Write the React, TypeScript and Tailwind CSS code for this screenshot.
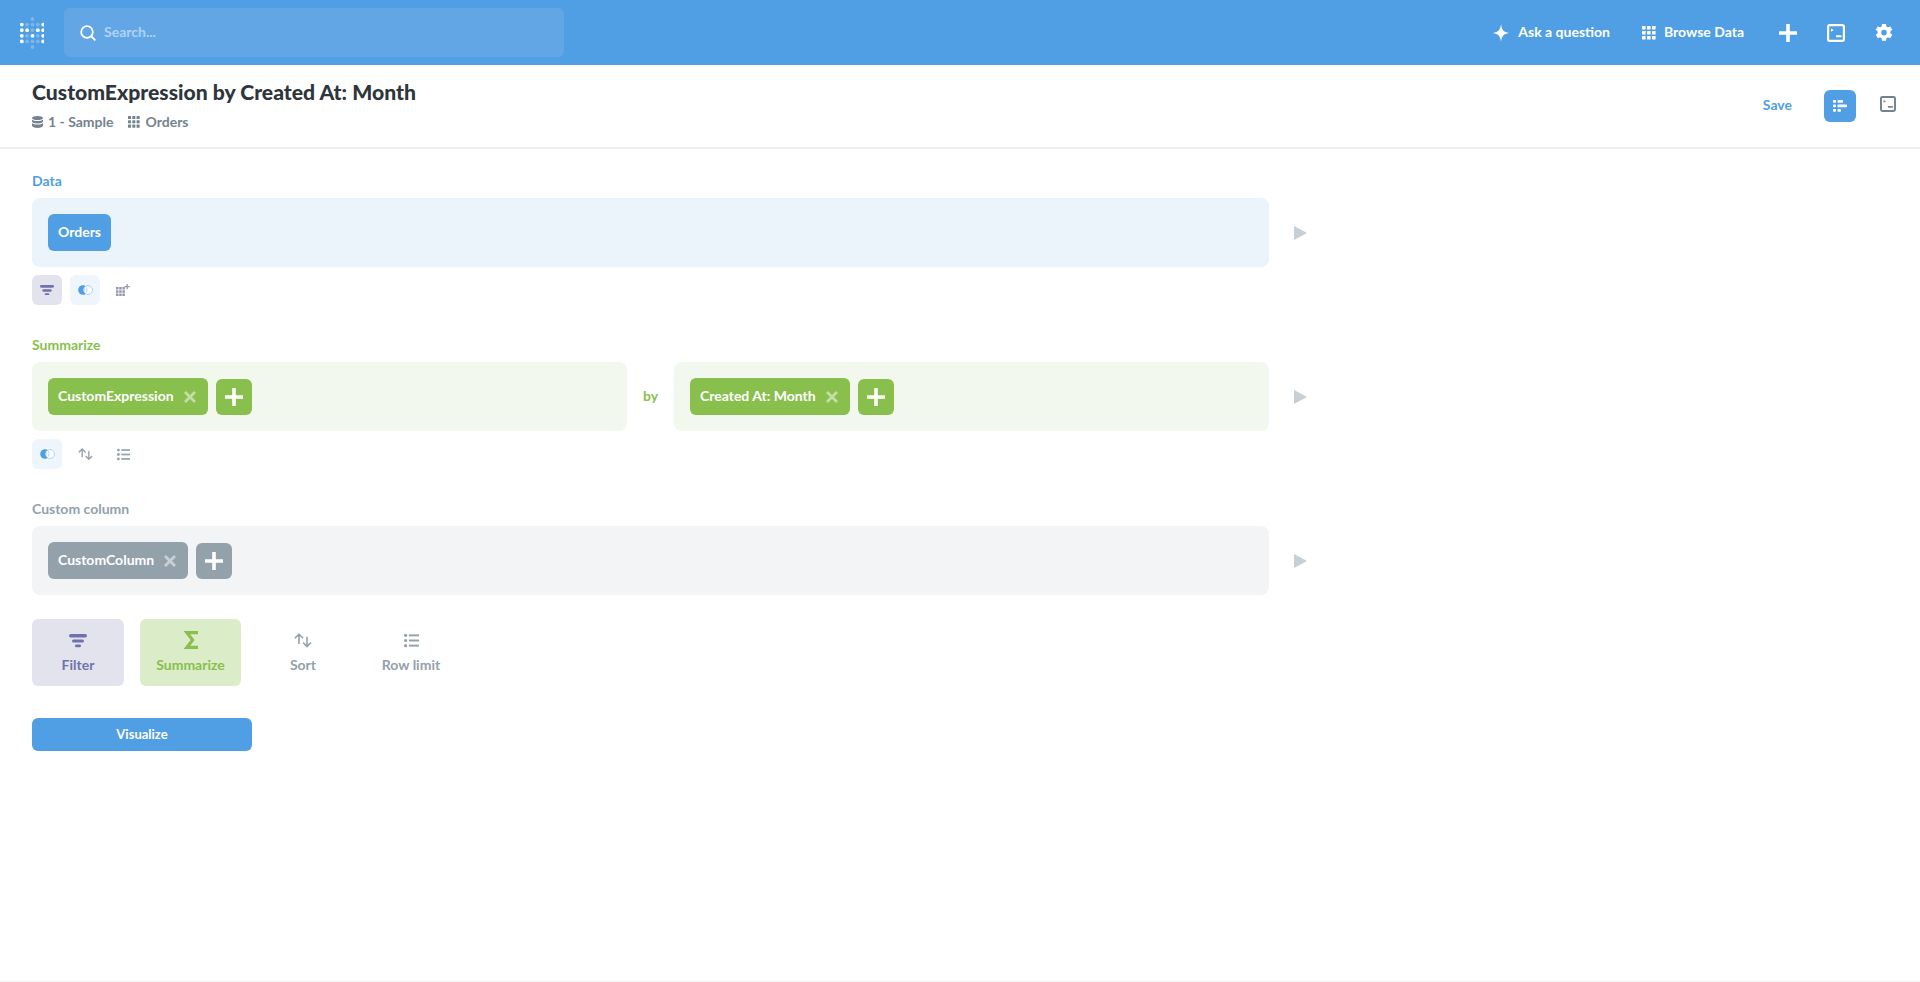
import type { ReactNode } from "react";

const Plus = ({ size = 18, className = "" }: { size?: number; className?: string }) => (
  <svg width={size} height={size} viewBox="0 0 18 18" className={className} fill="currentColor">
    <path d="M7.2 0h3.6v7.2H18v3.6h-7.2V18H7.2v-7.2H0V7.2h7.2z" />
  </svg>
);

const Close = () => (
  <svg width="12" height="12" viewBox="0 0 12 12" className="ml-[10px] mt-[2px] opacity-50">
    <path d="M1 1l10 10M11 1L1 11" stroke="currentColor" strokeWidth="2.8" />
  </svg>
);

const Grid = ({ size = 14 }: { size?: number }) => (
  <svg width={size} height={size} viewBox="0 0 14 14" fill="currentColor">
    {[0, 5, 10].map((y) =>
      [0, 5, 10].map((x) => <rect key={`${x}-${y}`} x={x} y={y} width="3.6" height="3.6" rx="0.4" />),
    )}
  </svg>
);

const Terminal = ({ size = 18 }: { size?: number }) => (
  <svg width={size} height={size} viewBox="0 0 18 18" fill="none">
    <rect x="1.1" y="1.1" width="15.8" height="15.8" rx="1.6" stroke="currentColor" strokeWidth="2.2" />
    <path d="M4 4.500l2.800 1.600L4 7.700z" fill="currentColor" />
    <rect x="9" y="11.300" width="5.500" height="1.900" fill="currentColor" />
  </svg>
);

const Funnel = ({ width = 18 }: { width?: number }) => (
  <svg width={width} height={(width * 14) / 18} viewBox="0 0 18 14" fill="currentColor">
    <rect x="0" y="0" width="18" height="3.4" rx="1.7" />
    <rect x="3" y="5.6" width="12" height="3" rx="1.5" />
    <rect x="6" y="10.6" width="6" height="2.6" rx="1.3" />
  </svg>
);

const Join = () => (
  <svg width="15" height="10" viewBox="0 0 15 10" className="text-[#509ee3]">
    <circle cx="5" cy="5" r="4.8" fill="currentColor" />
    <circle cx="10" cy="5" r="4.4" fill="#fff" stroke="currentColor" strokeOpacity="0.6" strokeWidth="0.7" />
    <path d="M7.500 1a4.800 4.800 0 0 1 0 8a4.800 4.800 0 0 1 0-8z" fill="#c5def5" />
    <path d="M7.500 2v6" stroke="#fff" strokeWidth="1.200" />
  </svg>
);

const SortIcon = ({ width = 15 }: { width?: number }) => (
  <svg width={width} height={(width * 14) / 17} viewBox="0 0 17 14" fill="none" stroke="currentColor" strokeWidth="1.5">
    <path d="M4.700 10.500V1.200M.8 5l3.900-3.900L8.600 5" />
    <path d="M12.300 3.500v9.300M8.600 9l3.700 3.800L16.100 9" />
  </svg>
);

const ListIcon = ({ size = 14 }: { size?: number }) => (
  <svg width={size} height={size} viewBox="0 0 14 14" fill="currentColor">
    <circle cx="1.5" cy="2.2" r="1.5" />
    <circle cx="1.5" cy="7" r="1.5" />
    <circle cx="1.5" cy="11.8" r="1.5" />
    <rect x="4.6" y="1.3" width="9.4" height="1.8" />
    <rect x="4.6" y="6.1" width="9.4" height="1.8" />
    <rect x="4.6" y="10.9" width="9.4" height="1.8" />
  </svg>
);

const Play = () => (
  <svg width="13" height="14" viewBox="0 0 13 14" className="text-[#c6ced6]" fill="currentColor">
    <path d="M0 0l13 7L0 14z" />
  </svg>
);

const Logo = () => {
  const on = ["1-0", "1-4", "2-0", "2-1", "2-3", "2-4", "3-0", "3-2", "3-4", "4-0", "4-4"];
  const rows = [
    [2],
    [0, 1, 2, 3, 4],
    [0, 1, 2, 3, 4],
    [0, 1, 2, 3, 4],
    [0, 1, 2, 3, 4],
    [2],
  ];
  return (
    <svg width="24" height="32" viewBox="0 0 24 32" fill="#fff">
      {rows.map((cols, r) =>
        cols.map((c) => (
          <circle
            key={`${r}-${c}`}
            cx={1.8 + c * 5.35}
            cy={2 + r * 5.6}
            r="1.9"
            opacity={on.includes(`${r}-${c}`) ? 1 : 0.25}
          />
        )),
      )}
    </svg>
  );
};

const Chip = ({ label, bg, x = true }: { label: string; bg: string; x?: boolean }) => (
  <div
    className={`flex h-[37px] items-center rounded-md pb-[2px] pl-[10px] text-[14px] font-bold text-white ${x ? "pr-3" : "pr-[10px]"} ${bg}`}
  >
    {label}
    {x && <Close />}
  </div>
);

const AddButton = ({ bg }: { bg: string }) => (
  <button type="button" className={`mt-px flex h-9 w-9 items-center justify-center rounded-md text-white ${bg}`}>
    <Plus />
  </button>
);

const Card = ({ bg, children }: { bg: string; children: ReactNode }) => (
  <div className={`flex h-[69px] flex-1 items-center gap-2 rounded-lg px-4 ${bg}`}>{children}</div>
);

const Step = ({
  title,
  color,
  children,
  actions,
}: {
  title: string;
  color: string;
  children: ReactNode;
  actions?: ReactNode;
}) => (
  <div>
    <div className={`mb-[7px] h-5 text-[14px] font-bold leading-5 ${color}`}>{title}</div>
    <div className="flex items-center">
      <div className="flex w-[1237px]">{children}</div>
      <div className="ml-[25px]">
        <Play />
      </div>
    </div>
    {actions && <div className="mb-[30px] mt-2 flex h-[30px] gap-2">{actions}</div>}
  </div>
);

const ActionIcon = ({ bg = "", children }: { bg?: string; children: ReactNode }) => (
  <div className={`flex h-[30px] w-[30px] items-center justify-center rounded-md ${bg}`}>{children}</div>
);

const TallAction = ({
  label,
  icon,
  className,
}: {
  label: string;
  icon: ReactNode;
  className: string;
}) => (
  <div className={`flex h-[67px] flex-col items-center rounded-md text-[14px] font-bold ${className}`}>
    <div className="flex h-[29px] items-end">{icon}</div>
    <div className="mt-[7px] leading-5">{label}</div>
  </div>
);

export default function App() {
  return (
    <div className="flex h-[982px] flex-col overflow-hidden bg-white font-['Lato',sans-serif] text-[#4c5773]">
      <header className="flex h-[65px] shrink-0 items-center bg-[#509ee3] text-white">
        <div className="ml-5 w-[24px]">
          <Logo />
        </div>
        <div className="ml-5 flex h-[49px] w-[500px] items-center rounded-md bg-[#63a6e6] pl-4">
          <svg width="16" height="16" viewBox="0 0 16 16" fill="none" stroke="#fff" strokeWidth="1.8">
            <circle cx="7" cy="7" r="5.8" />
            <path d="M11 11l4.4 4.4" />
          </svg>
          <span className="mb-[2px] ml-2 text-[14px] font-bold text-white/50">Search...</span>
        </div>
        <div className="ml-auto flex items-center text-[14px] font-bold">
          <svg width="16" height="18" viewBox="0 0 16 18" fill="currentColor">
            <path d="M8 0c.6 5.4 2.4 8 8 9-5.6 1-7.4 3.6-8 9-.6-5.4-2.4-8-8-9 5.600-1 7.400-3.600 8-9z" />
          </svg>
          <span className="mb-[2px] ml-[9px]">Ask a question</span>
          <span className="ml-8">
            <Grid />
          </span>
          <span className="mb-[2px] ml-2">Browse Data</span>
          <Plus className="ml-[35px]" />
          <span className="ml-[30px]">
            <Terminal />
          </span>
          <svg width="18" height="18" viewBox="0 0 24 24" className="ml-[30px] mr-[27px]" fill="currentColor">
            <path
              fillRule="evenodd"
              d="M14.6 0l.6 3.300c.7.3 1.400.7 2 1.100l3.200-1.100 2.600 4.500-2.600 2.200c.1.700.1 1.500 0 2.200l2.600 2.200-2.600 4.500-3.200-1.100c-.6.4-1.300.8-2 1.100l-.6 3.300H9.400l-.6-3.300c-.7-.3-1.400-.7-2-1.100l-3.200 1.100L1 14.400l2.600-2.200c-.1-.7-.1-1.500 0-2.200L1 7.800l2.600-4.500 3.200 1.100c.6-.4 1.300-.8 2-1.100L9.400 0h5.200zM12 7.800a3.700 3.700 0 1 0 0 7.400 3.700 3.700 0 0 0 0-7.400z"
            />
          </svg>
        </div>
      </header>

      <div className="flex h-[84px] shrink-0 items-start justify-between border-b-2 border-[#f0f0f0] pl-8 pr-[24px]">
        <div>
          <h1 className="mt-[15px] text-[21.15px] font-black leading-6 text-[#2e353b]">
            CustomExpression by Created At: Month
          </h1>
          <div className="mt-[9px] flex items-center text-[14px] font-bold leading-[18px] text-[#74838f]">
            <svg width="11" height="12" viewBox="0 0 11 12" fill="currentColor">
              <ellipse cx="5.500" cy="2" rx="5.500" ry="2" />
              <path d="M0 3.400c1 1.200 3.200 1.600 5.500 1.600s4.500-.4 5.500-1.600V5.500C11 6.700 8.500 7.500 5.500 7.500S0 6.700 0 5.500zM0 7c1 1.200 3.200 1.600 5.500 1.600S10 8.200 11 7v2.600c0 1.300-2.500 2.400-5.500 2.400S0 10.900 0 9.600z" />
            </svg>
            <span className="ml-[5px]">1 - Sample</span>
            <span className="ml-[15px]">
              <Grid size={12} />
            </span>
            <span className="ml-[5px]">Orders</span>
          </div>
        </div>
        <div className="flex items-center pt-[25px]">
          <span className="mb-1 text-[14px] font-bold text-[#509ee3]">Save</span>
          <div className="ml-8 flex h-8 w-8 items-center justify-center rounded-md bg-[#509ee3] text-white">
            <svg width="14" height="12" viewBox="0 0 14 12" fill="currentColor">
              <rect x="0" y="0" width="3" height="2.800" rx="0.800" />
              <rect x="0" y="4.500" width="3" height="2.800" rx="0.800" />
              <rect x="0" y="9" width="3" height="2.800" rx="0.800" />
              <rect x="4.500" y="0" width="5.500" height="2.800" rx="0.800" />
              <rect x="4.500" y="4.500" width="9.500" height="2.800" rx="0.800" />
              <rect x="4.500" y="9" width="3.500" height="2.800" rx="0.800" />
            </svg>
          </div>
          <span className="mb-1 ml-6 text-[#74838f]">
            <Terminal size={16} />
          </span>
        </div>
      </div>

      <main className="flex-1 pl-8 pt-[22px]">
        <Step
          title="Data"
          color="text-[#509ee3]"
          actions={
            <>
              <ActionIcon bg="bg-[#e3e3ee]">
                <span className="text-[#7172ad]">
                  <Funnel width={14} />
                </span>
              </ActionIcon>
              <ActionIcon bg="bg-[#eef5fd]">
                <Join />
              </ActionIcon>
              <ActionIcon>
                <svg width="14" height="12" viewBox="0 0 14 12" className="text-[#949aab]" fill="currentColor">
                  {[3, 6.300, 9.500].map((y) =>
                    [0, 3.200, 6.400].map((x) => <rect key={`${x}-${y}`} x={x} y={y} width="2.500" height="2.500" />),
                  )}
                  <path d="M10.500 0h1.300v2h2v1.300h-2v2h-1.300v-2h-2V2h2z" />
                </svg>
              </ActionIcon>
            </>
          }
        >
          <Card bg="bg-[#ebf3fb]">
            <Chip label="Orders" bg="bg-[#509ee3]" x={false} />
          </Card>
        </Step>

        <Step
          title="Summarize"
          color="text-[#88bf4d]"
          actions={
            <>
              <ActionIcon bg="bg-[#eef5fd]">
                <Join />
              </ActionIcon>
              <ActionIcon>
                <span className="text-[#93a1ab]">
                  <SortIcon />
                </span>
              </ActionIcon>
              <ActionIcon>
                <span className="text-[#93a1ab]">
                  <ListIcon size={13} />
                </span>
              </ActionIcon>
            </>
          }
        >
          <Card bg="bg-[#f2f8ed]">
            <Chip label="CustomExpression" bg="bg-[#88bf4d]" />
            <AddButton bg="bg-[#88bf4d]" />
          </Card>
          <div className="flex w-[47px] shrink-0 items-center justify-center pb-[2px] text-[14px] font-bold text-[#88bf4d]">
            by
          </div>
          <Card bg="bg-[#f2f8ed]">
            <Chip label="Created At: Month" bg="bg-[#88bf4d]" />
            <AddButton bg="bg-[#88bf4d]" />
          </Card>
        </Step>

        <Step title="Custom column" color="text-[#93a1ab]">
          <Card bg="bg-[#f3f4f6]">
            <Chip label="CustomColumn" bg="bg-[#93a1ab]" />
            <AddButton bg="bg-[#93a1ab]" />
          </Card>
        </Step>

        <div className="mt-6 flex gap-4">
          <TallAction
            label="Filter"
            className="w-[92px] bg-[#e3e3ee] text-[#7172ad]"
            icon={<Funnel />}
          />
          <TallAction
            label="Summarize"
            className="w-[101px] bg-[#dbecc8] text-[#88bf4d]"
            icon={
              <svg width="14" height="18" viewBox="0 0 14 18" className="translate-y-px" fill="none" stroke="currentColor" strokeWidth="3.200">
                <path d="M14 1.600H2.800L8.600 9l-5.800 7.400H14" />
              </svg>
            }
          />
          <TallAction
            label="Sort"
            className="w-[92px] text-[#93a1ab]"
            icon={<SortIcon width={18} />}
          />
          <TallAction
            label="Row limit"
            className="w-[92px] text-[#93a1ab]"
            icon={<ListIcon size={15} />}
          />
        </div>

        <button
          type="button"
          className="mt-8 h-[33px] w-[220px] rounded-md bg-[#509ee3] text-[13px] font-bold text-white"
        >
          Visualize
        </button>
      </main>
      <div className="h-px shrink-0 bg-[#f0f0f0]" />
    </div>
  );
}
